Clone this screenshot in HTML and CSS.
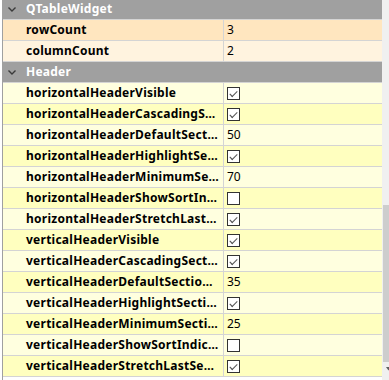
FILE: index.html
```html
<!DOCTYPE html>
<html lang="en">
  <head>
    <meta charset="UTF-8" />
    <title>Property Editor</title>
    <link rel="stylesheet" href="styles.css">
  </head>
  <body>
    <div class="editor">
      <div class="tree">
        <div class="rows">
          <div class="group">
            <svg class="arrow" width="8" height="5" viewBox="0 0 8 5"><polyline points="0.5,0.5 4,4 7.5,0.5" /></svg>
            <span>QTableWidget</span>
          </div>
          <div class="row orange dark">
            <div class="name">rowCount</div>
            <div class="value">3</div>
          </div>
          <div class="row orange">
            <div class="name">columnCount</div>
            <div class="value">2</div>
          </div>
          <div class="group">
            <svg class="arrow" width="8" height="5" viewBox="0 0 8 5"><polyline points="0.5,0.5 4,4 7.5,0.5" /></svg>
            <span>Header</span>
          </div>
          <div class="row yellow">
            <div class="name">horizontalHeaderVisible</div>
            <div class="value"><span class="check on"></span></div>
          </div>
          <div class="row yellow dark">
            <div class="name">horizontalHeaderCascadingSectionResizes</div>
            <div class="value"><span class="check on"></span></div>
          </div>
          <div class="row yellow">
            <div class="name">horizontalHeaderDefaultSectionSize</div>
            <div class="value">50</div>
          </div>
          <div class="row yellow dark">
            <div class="name">horizontalHeaderHighlightSections</div>
            <div class="value"><span class="check on"></span></div>
          </div>
          <div class="row yellow">
            <div class="name">horizontalHeaderMinimumSectionSize</div>
            <div class="value">70</div>
          </div>
          <div class="row yellow dark">
            <div class="name">horizontalHeaderShowSortIndicator</div>
            <div class="value"><span class="check"></span></div>
          </div>
          <div class="row yellow">
            <div class="name">horizontalHeaderStretchLastSection</div>
            <div class="value"><span class="check on"></span></div>
          </div>
          <div class="row yellow dark">
            <div class="name">verticalHeaderVisible</div>
            <div class="value"><span class="check on"></span></div>
          </div>
          <div class="row yellow">
            <div class="name">verticalHeaderCascadingSectionResizes</div>
            <div class="value"><span class="check on"></span></div>
          </div>
          <div class="row yellow dark">
            <div class="name">verticalHeaderDefaultSectionSize</div>
            <div class="value">35</div>
          </div>
          <div class="row yellow">
            <div class="name">verticalHeaderHighlightSections</div>
            <div class="value"><span class="check on"></span></div>
          </div>
          <div class="row yellow dark">
            <div class="name">verticalHeaderMinimumSectionSize</div>
            <div class="value">25</div>
          </div>
          <div class="row yellow">
            <div class="name">verticalHeaderShowSortIndicator</div>
            <div class="value"><span class="check"></span></div>
          </div>
          <div class="row yellow dark">
            <div class="name">verticalHeaderStretchLastSection</div>
            <div class="value"><span class="check on"></span></div>
          </div>
        </div>
      </div>
      <div class="scrollbar">
        <div class="thumb"></div>
        <svg class="down" width="5" height="4" viewBox="0 0 5 4"><polygon points="0,0 5,0 2.5,3.5" /></svg>
      </div>
    </div>
  </body>
</html>
```

FILE: styles.css
```css
html, body {
  margin: 0;
  padding: 0;
  background: #fff;
}
.editor {
  width: 389px;
  height: 380px;
  display: flex;
  overflow: hidden;
  font-family: "Noto Sans", "Open Sans", sans-serif;
  font-size: 12px;
  color: #000;
}
.tree {
  width: 382px;
  height: 380px;
  overflow: hidden;
  border-left: 1px solid #a0a0a0;
  margin-left: 2px;
  box-sizing: border-box;
}
.rows {
  margin-top: -1px;
}

/* 그룹 헤더 */
.group {
  height: 20px;
  border-bottom: 1px solid #d4d4d4;
  background: #a0a0a0;
  color: #fff;
  font-weight: bold;
  letter-spacing: 0.25px;
  display: flex;
  align-items: center;
  line-height: 20px;
}
.arrow {
  margin-left: 5px;
  margin-right: 10px;
  fill: none;
  stroke: #3a3a3a;
  stroke-width: 1.4;
}

/* 속성 행 */
.row {
  height: 20px;
  border-bottom: 1px solid #d4d4d4;
  display: flex;
  line-height: 20px;
}
.row.orange { background: #fff3df; }
.row.orange.dark { background: #ffe6bf; }
.row.yellow { background: #ffffdf; }
.row.yellow.dark { background: #ffffbf; }
.name {
  flex: 0 0 221px;
  padding-left: 23px;
  padding-right: 3px;
  box-sizing: border-box;
  border-right: 1px solid #d4d4d4;
  font-weight: bold;
  letter-spacing: 0.25px;
  white-space: nowrap;
  overflow: hidden;
  text-overflow: ellipsis;
}
.value {
  flex: 1;
  min-width: 0;
  padding-left: 3px;
  display: flex;
  align-items: center;
}
.check {
  width: 13px;
  height: 13px;
  box-sizing: border-box;
  border: 1px solid #333;
  background: #fff;
  position: relative;
}
.check.on::after {
  content: "";
  position: absolute;
  left: 2px;
  top: 1px;
  width: 6px;
  height: 3px;
  border-left: 1px solid #555;
  border-bottom: 1px solid #555;
  transform: translate(0, 2px) rotate(-45deg) scale(1.1, 1);
}

/* 스크롤바 */
.scrollbar {
  width: 7px;
  height: 380px;
  background: #f0f0f0;
  position: relative;
}
.thumb {
  margin-top: 205px;
  margin-left: 1px;
  height: 157px;
  background: #cdcdcd;
}
.down {
  position: absolute;
  left: 4px;
  top: 367px;
  fill: #606060;
}
```
